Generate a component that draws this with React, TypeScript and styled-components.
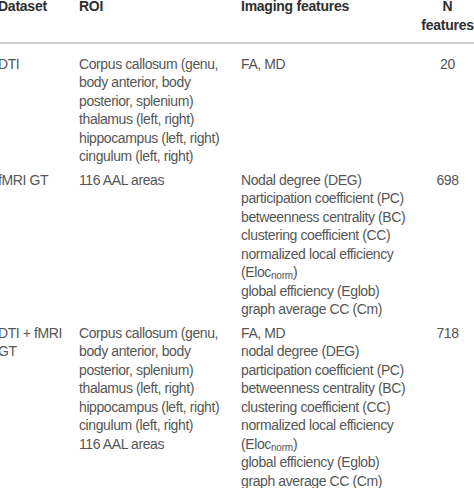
import React from "react";
import styled, { createGlobalStyle } from "styled-components";

const GlobalStyle = createGlobalStyle`
  html, body {
    margin: 0;
    padding: 0;
    background: #ffffff;
    overflow: hidden;
  }
`;

const Table = styled.div`
  display: grid;
  grid-template-columns: 81px 162px 180px 53px;
  margin: -3px 0 0 -2px;
  font-family: "Liberation Sans", Arial, sans-serif;
  font-size: 14px;
  line-height: 18.5px;
  letter-spacing: -0.4px;
  color: #565656;
`;

const HeadCell = styled.div<{ $center?: boolean }>`
  font-weight: 700;
  color: #2e2e2e;
  letter-spacing: -0.25px;
  padding-bottom: 8px;
  border-bottom: 2px solid #cfcfcf;
  text-align: ${(p) => (p.$center ? "center" : "left")};
  white-space: nowrap;
`;

const Cell = styled.div<{ $center?: boolean; $first?: boolean }>`
  padding-top: ${(p) => (p.$first ? "10.5px" : "2.5px")};
  padding-bottom: 2.5px;
  text-align: ${(p) => (p.$center ? "center" : "left")};
`;

const Line = styled.div`
  white-space: nowrap;
`;

const Sub = styled.sub`
  font-size: 10px;
  line-height: 0;
  vertical-align: -2px;
  letter-spacing: -0.2px;
`;

const roiDti = [
  "Corpus callosum (genu,",
  "body anterior, body",
  "posterior, splenium)",
  "thalamus (left, right)",
  "hippocampus (left, right)",
  "cingulum (left, right)",
];

const graphFeatures = (first: string) => [
  first,
  "participation coefficient (PC)",
  "betweenness centrality (BC)",
  "clustering coefficient (CC)",
  "normalized local efficiency",
  "ELOC",
  "global efficiency (Eglob)",
  "graph average CC (Cm)",
];

type Row = {
  dataset: string[];
  roi: string[];
  features: string[];
  n: string;
};

const rows: Row[] = [
  { dataset: ["DTI"], roi: roiDti, features: ["FA, MD"], n: "20" },
  {
    dataset: ["fMRI GT"],
    roi: ["116 AAL areas"],
    features: graphFeatures("Nodal degree (DEG)"),
    n: "698",
  },
  {
    dataset: ["DTI + fMRI", "GT"],
    roi: [...roiDti, "116 AAL areas"],
    features: ["FA, MD", ...graphFeatures("nodal degree (DEG)")],
    n: "718",
  },
];

const renderLine = (text: string, i: number) =>
  text === "ELOC" ? (
    <Line key={i}>
      (Eloc<Sub>norm</Sub>)
    </Line>
  ) : (
    <Line key={i}>{text}</Line>
  );

const App: React.FC = () => {
  return (
    <>
      <GlobalStyle />
      <Table>
        <HeadCell>Dataset</HeadCell>
        <HeadCell>ROI</HeadCell>
        <HeadCell>Imaging features</HeadCell>
        <HeadCell $center>
          N
          <br />
          features
        </HeadCell>

        {rows.map((row, r) => (
          <React.Fragment key={r}>
            <Cell $first={r === 0}>{row.dataset.map(renderLine)}</Cell>
            <Cell $first={r === 0}>{row.roi.map(renderLine)}</Cell>
            <Cell $first={r === 0}>{row.features.map(renderLine)}</Cell>
            <Cell $first={r === 0} $center>
              {row.n}
            </Cell>
          </React.Fragment>
        ))}
      </Table>
    </>
  );
};

export default App;
